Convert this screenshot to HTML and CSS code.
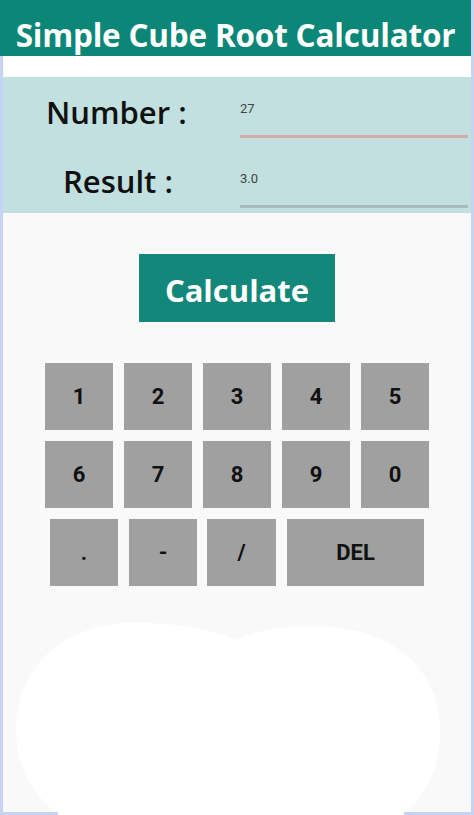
FILE: index.html
```html
<!DOCTYPE html>
<html>
<head>
<meta charset="utf-8">
<link rel="stylesheet" href="styles.css">
</head>
<body>
<div class="frame">
  <header class="bar">Simple Cube Root Calculator</header>
  <div class="gapline"></div>
  <section class="panel">
    <div class="row">
      <div class="label l1">Number :</div>
      <div class="field pink"><span>27</span></div>
    </div>
    <div class="row r2">
      <div class="label l2">Result :</div>
      <div class="field grey"><span>3.0</span></div>
    </div>
  </section>
  <div class="calcwrap"><div class="calc">Calculate</div></div>
  <div class="keys">
    <div class="krow">
      <div class="key">1</div><div class="key">2</div><div class="key">3</div><div class="key">4</div><div class="key">5</div>
    </div>
    <div class="krow">
      <div class="key">6</div><div class="key">7</div><div class="key">8</div><div class="key">9</div><div class="key">0</div>
    </div>
    <div class="krow k3">
      <div class="key">.</div><div class="key">-</div><div class="key slash">/</div><div class="key del">DEL</div>
    </div>
  </div>
  <div class="cloud">
    <svg width="474" height="195" viewBox="0 0 474 195">
      <path d="M16 110 C16 50 60 5 130 3 C175 2 215 10 236 20 C260 8 290 5 330 7 C400 12 440 55 440 110 C440 150 425 175 404 195 L58 195 C35 175 16 150 16 110 Z" fill="#ffffff"/>
    </svg>
  </div>
  <div class="bottomline"><div class="bl"></div><div class="br"></div></div>
</div>
</body>
</html>
```
FILE: styles.css
```css
html, body { margin: 0; padding: 0; }
body { width: 474px; height: 815px; overflow: hidden; background: #f9f9f9; font-family: "Open Sans", "Noto Sans", sans-serif; }
.frame { position: relative; width: 474px; height: 815px; box-sizing: border-box; border-left: 3px solid #c6d3f2; border-right: 3px solid #c6d3f2; background: #f9f9f9; }
.bar { margin-left: -3px; height: 56px; background: #0b8677; color: #fff; font-weight: 700; font-size: 31.5px; text-align: center; letter-spacing: -0.2px; box-sizing: border-box; padding-top: 12px; line-height: 46px; white-space: nowrap; }
.gapline { height: 21px; background: #ffffff; }
.panel { height: 136px; background: #c1e0df; box-sizing: border-box; padding-top: 12px; }
.row { display: flex; height: 61px; }
.r2 { height: 63px; }
.label { width: 237px; font-weight: 600; font-size: 31px; color: #111; box-sizing: border-box; white-space: nowrap; }
.l1 { padding-left: 43px; line-height: 46px; }
.l2 { padding-left: 60px; line-height: 46px; padding-top: 8px; }
.field { flex: 1; margin-right: 3px; box-sizing: border-box; font-family: "Roboto", sans-serif; font-size: 13px; color: #444; }
.field span { display: block; padding-top: 12px; }
.pink { border-bottom: 3px solid #d2aca8; height: 49px; }
.grey { border-bottom: 3px solid #a7bcbc; height: 58px; }
.grey span { padding-top: 21px; }
.calcwrap { display: flex; justify-content: center; padding-top: 41px; }
.calc { width: 196px; height: 68px; background: #13877a; color: #fff; font-weight: 700; font-size: 31px; line-height: 72px; text-align: center; }
.keys { display: flex; flex-direction: column; gap: 11px; padding-top: 41px; }
.krow { display: flex; gap: 11px; padding-left: 42px; }
.k3 { padding-left: 47px; }
.key { width: 68px; height: 67px; background: #a0a0a0; font-family: "Roboto", sans-serif; font-weight: 700; font-size: 22px; color: #111; display: flex; align-items: center; justify-content: center; }
.slash { width: 69px; margin-left: -1px; }
.del { width: 137px; }
.cloud { position: absolute; left: -3px; top: 620px; width: 474px; height: 195px; }
.cloud svg { display: block; }
.bottomline { position: absolute; left: -3px; bottom: 0; width: 474px; height: 3px; display: flex; justify-content: space-between; }
.bl { width: 58px; background: #c6d3f2; }
.br { width: 70px; background: #c6d3f2; }
```
